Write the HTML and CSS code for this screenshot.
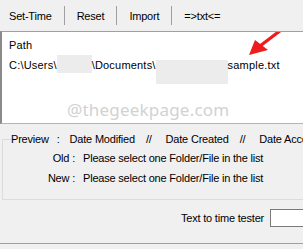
FILE: index.html
```html
<!DOCTYPE html>
<html lang="en">

<head>
    <meta charset="UTF-8">
    <meta name="viewport" content="width=device-width, initial-scale=1.0">
    <title>Set-Time</title>
    <link rel="stylesheet" href="styles.css">
</head>

<body>
    <div class="janela">
        <div class="barra">
            <span class="botao">Set-Time</span>
            <span class="sep"></span>
            <span class="botao">Reset</span>
            <span class="sep"></span>
            <span class="botao">Import</span>
            <span class="sep"></span>
            <span class="botao">=&gt;txt&lt;=</span>
        </div>

        <div class="lista">
            <div class="linha">Path</div>
            <div class="linha">C:\Users\<span class="borrao b1"></span>\Documents\<span class="borrao b2"></span>sample.txt</div>
            <div class="marca">@thegeekpage.com</div>
            <svg class="seta" width="50" height="40" viewBox="0 0 50 40">
                <line x1="39" y1="0" x2="14" y2="19" stroke="#ee1c1c" stroke-width="3.2" stroke-linecap="round" />
                <polygon points="3,28 9,13 22,23" fill="#ee1c1c" />
            </svg>
        </div>

        <fieldset class="grupo">
            <legend>
                <span>Preview</span><span class="dois">:</span><span>Date Modified</span><span class="barras">//</span><span>Date Created</span><span class="barras">//</span><span>Date Accessed</span>
            </legend>
            <div class="info"><span class="rotulo">Old :</span><span>Please select one Folder/File in the list</span></div>
            <div class="info"><span class="rotulo">New :</span><span>Please select one Folder/File in the list</span></div>
        </fieldset>

        <div class="teste">
            <label for="tester">Text to time tester</label>
            <input type="text" id="tester">
        </div>
        <div class="rodape"></div>
    </div>
</body>

</html>
```

FILE: styles.css
```css
body {
    margin: 0;
    background: #f0f0f0;
    font-family: "Liberation Sans", Arial, sans-serif;
    font-size: 11px;
    letter-spacing: -0.2px;
    color: #000000;
    overflow: hidden;
}

.janela {
    width: 380px;
}

.barra {
    display: flex;
    align-items: center;
    height: 31px;
    padding-left: 9px;
}

.botao {
    line-height: 16px;
}

.sep {
    width: 1px;
    height: 19px;
    background: #a0a0a0;
    margin: 0 12px;
}

.lista {
    position: relative;
    height: 93px;
    box-sizing: border-box;
    background: #ffffff;
    border-top: 1px solid #a0a0a0;
    border-bottom: 1px solid #b4b4b4;
    border-left: 2px solid #8a8a8a;
    padding: 3px 0 0 7px;
    overflow: hidden;
}

.linha {
    line-height: 20px;
    height: 20px;
    white-space: nowrap;
    letter-spacing: 0.2px;
}

.borrao {
    display: inline-block;
    background: #ececec;
}

.b1 {
    width: 35px;
    height: 18px;
    vertical-align: -4px;
}

.b2 {
    width: 72px;
    height: 24px;
    vertical-align: -15px;
}

.marca {
    position: absolute;
    left: 65px;
    top: 66px;
    font-family: "Noto Sans", sans-serif;
    font-size: 17px;
    color: #d2d2d2;
    letter-spacing: 0.2px;
}

.seta {
    position: absolute;
    left: 244px;
    top: -5px;
}

.grupo {
    margin: 7px 0 0 2px;
    padding: 1px 0 11px 0;
    border: 1px solid #dcdcdc;
    border-right: none;
}

.grupo legend {
    padding: 0;
    margin-left: 8px;
    line-height: 16px;
    white-space: nowrap;
}

.dois {
    margin: 0 10px 0 8px;
}

.barras {
    margin: 0 14px 0 11px;
}

.info {
    display: flex;
    line-height: 20px;
    white-space: nowrap;
}

.rotulo {
    width: 72px;
    text-align: right;
    margin-right: 8px;
}

.teste {
    display: flex;
    align-items: center;
    height: 43px;
    box-sizing: border-box;
    padding: 9px 0 16px 181px;
    white-space: nowrap;
}

.teste label {
    margin-right: 6px;
}

.teste input {
    width: 60px;
    height: 18px;
    box-sizing: border-box;
    border: 1px solid #7a7a7a;
    padding: 0;
    margin: 0;
    background: #ffffff;
}

.rodape {
    border-top: 1px solid #a0a0a0;
    height: 10px;
}
```
